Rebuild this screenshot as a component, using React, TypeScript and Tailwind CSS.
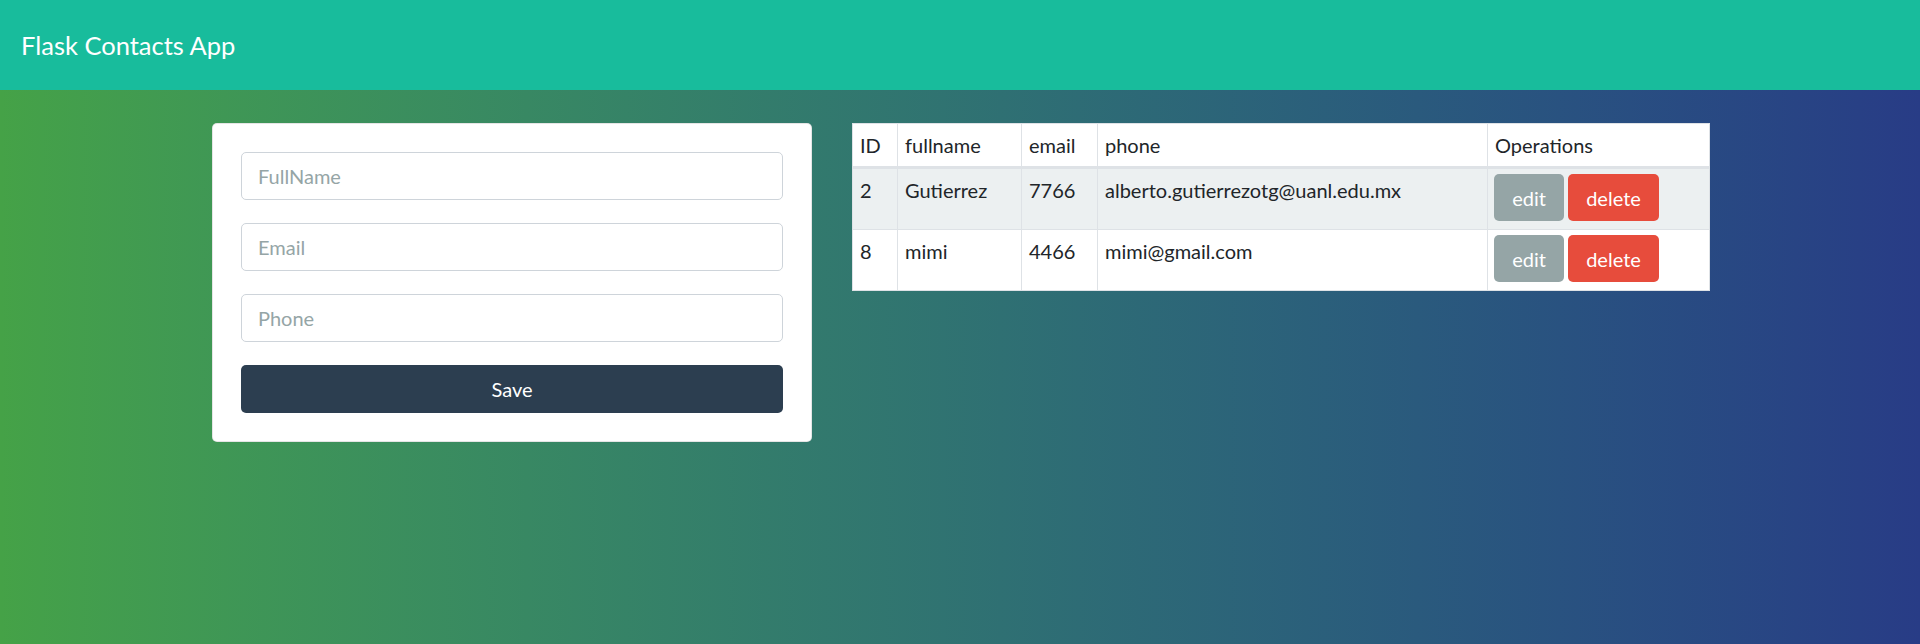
import React from 'react';

interface Contact {
  id: number;
  fullname: string;
  email: string;
  phone: string;
}

const contacts: Contact[] = [
  { id: 2, fullname: 'Gutierrez', email: '7766', phone: 'alberto.gutierrezotg@uanl.edu.mx' },
  { id: 8, fullname: 'mimi', email: '4466', phone: 'mimi@gmail.com' },
];

const App: React.FC = () => {
  return (
    <div
      className="min-h-screen bg-linear-to-r from-[#45a247] to-[#283c86] text-[20px] leading-[28px] text-[#212529]"
      style={{ fontFamily: 'Lato, "Open Sans", "Liberation Sans", sans-serif' }}
    >
      {/* Navbar */}
      <nav className="bg-[#18bc9c] h-[90px] flex items-center px-[21px]">
        <span className="text-white text-[25.5px] leading-[37px]">Flask Contacts App</span>
      </nav>

      <main className="flex items-start gap-[40px] pl-[212px] pt-[33px]">
        {/* Form card */}
        <div className="w-[600px] bg-white rounded-[5px] border border-black/10 p-[28px]">
          <form className="flex flex-col gap-[23px]" onSubmit={(e) => e.preventDefault()}>
            <input
              type="text"
              placeholder="FullName"
              className="h-[48px] w-full rounded-[5px] border border-[#ced4da] px-[16px] outline-none placeholder:text-[#95a5a6]"
            />
            <input
              type="text"
              placeholder="Email"
              className="h-[48px] w-full rounded-[5px] border border-[#ced4da] px-[16px] outline-none placeholder:text-[#95a5a6]"
            />
            <input
              type="text"
              placeholder="Phone"
              className="h-[48px] w-full rounded-[5px] border border-[#ced4da] px-[16px] outline-none placeholder:text-[#95a5a6]"
            />
            <button className="h-[48px] w-full rounded-[5px] bg-[#2c3e50] text-white">Save</button>
          </form>
        </div>

        {/* Contacts table */}
        <table className="w-[858px] table-fixed border-collapse bg-white">
          <thead>
            <tr>
              <th className="w-[45px] border border-[#dee2e6] border-b-[3px] p-[7px] text-left font-normal">ID</th>
              <th className="w-[124px] border border-[#dee2e6] border-b-[3px] p-[7px] text-left font-normal">fullname</th>
              <th className="w-[76px] border border-[#dee2e6] border-b-[3px] p-[7px] text-left font-normal">email</th>
              <th className="w-[390px] border border-[#dee2e6] border-b-[3px] p-[7px] text-left font-normal">phone</th>
              <th className="border border-[#dee2e6] border-b-[3px] p-[7px] text-left font-normal">Operations</th>
            </tr>
          </thead>
          <tbody>
            {contacts.map((c, i) => (
              <tr key={c.id} className={i % 2 === 0 ? 'bg-[#ecf0f1]' : 'bg-white'}>
                <td className="border border-[#dee2e6] p-[7px] align-top">{c.id}</td>
                <td className="border border-[#dee2e6] p-[7px] align-top">{c.fullname}</td>
                <td className="border border-[#dee2e6] p-[7px] align-top">{c.email}</td>
                <td className="border border-[#dee2e6] p-[7px] align-top">{c.phone}</td>
                <td className="border border-[#dee2e6] pt-[5px] pb-[8px] px-[6px] align-top">
                  <div className="flex gap-[4px]">
                    <a className="h-[47px] w-[70px] flex items-center justify-center rounded-[5px] bg-[#95a5a6] text-white">
                      edit
                    </a>
                    <a className="h-[47px] w-[91px] flex items-center justify-center rounded-[5px] bg-[#e74c3c] text-white">
                      delete
                    </a>
                  </div>
                </td>
              </tr>
            ))}
          </tbody>
        </table>
      </main>
    </div>
  );
};

export default App;
